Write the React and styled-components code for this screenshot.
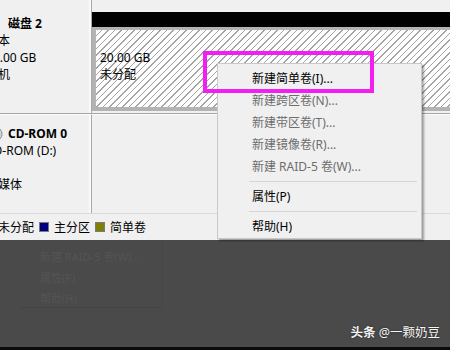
import React from 'react';
import styled, { createGlobalStyle } from 'styled-components';

const GlobalStyle = createGlobalStyle`
  html, body {
    margin: 0;
    padding: 0;
    background: #4a4a4a;
  }
  * {
    box-sizing: border-box;
  }
`;

const FONT = `"Noto Sans", "Noto Sans CJK SC", sans-serif`;

const Screen = styled.div`
  position: relative;
  width: 450px;
  height: 350px;
  overflow: hidden;
  display: flex;
  flex-direction: column;
  background: #4a4a4a;
  font-family: ${FONT};
  font-size: 12px;
  color: #000;
`;

const Window = styled.div`
  height: 240px;
  flex: none;
  display: flex;
  flex-direction: column;
  background: #f0f0f0;
`;

const DiskRow = styled.div`
  display: grid;
  grid-template-columns: 92px 1fr;
  height: ${(p) => p.$height}px;
  border-bottom: ${(p) => (p.$divider ? '1px solid #a6a6a6' : 'none')};
`;

const Label = styled.div`
  overflow: hidden;
  border-right: 1px solid #a9a9a9;
  box-shadow: inset -2px 0 0 #fafafa;
  padding-top: ${(p) => p.$top}px;
  line-height: 17px;
  white-space: nowrap;
  border-top: ${(p) => (p.$topLine ? '1px solid #fbfbfb' : 'none')};
`;

const LabelTitle = styled.div`
  display: flex;
  align-items: center;
  gap: 5px;
  font-weight: 700;
  padding-left: ${(p) => (p.$icon ? 0 : 8)}px;
`;

const DriveIcon = styled.svg`
  flex: none;
  margin-left: -13px;
`;

const LabelLine = styled.div`
  margin-left: -14px;
  height: 17px;
`;

const DiskArea = styled.div`
  padding-top: 12px;
  border-top: ${(p) => (p.$topLine ? '1px solid #fbfbfb' : 'none')};
`;

const DiskBar = styled.div`
  height: 15px;
  background: #000;
`;

const Partition = styled.div`
  height: 84px;
  border: 4px solid #b3b3b3;
  border-top-width: 3px;
  border-right: none;
  padding: 19px 0 0 4px;
  line-height: 17px;
  background-color: #fff;
  background-image: repeating-linear-gradient(
    135deg,
    #fff 0px,
    #fff 3.6px,
    #a4a4a4 3.6px,
    #a4a4a4 4.6px
  );
`;

const Legend = styled.div`
  flex: 1;
  display: flex;
  align-items: center;
  gap: 5px;
  margin-left: -17px;
  padding-bottom: 1px;
  border-top: 1px solid #dadada;
  white-space: nowrap;
`;

const Swatch = styled.span`
  width: 10px;
  height: 10px;
  flex: none;
  background: ${(p) => p.$color};
  outline: 1px solid #7a7a7a;
  outline-offset: -1px;
`;

const Menu = styled.div`
  position: absolute;
  left: 217px;
  top: 63px;
  width: 205px;
  height: 176px;
  padding: 4px 2px;
  background: #f0f0f0;
  border: 1px solid #c8c8c8;
  box-shadow: 2px 2px 2px rgba(0, 0, 0, 0.35);
`;

const MenuItem = styled.div`
  height: 22px;
  line-height: 22px;
  padding-left: 32px;
  color: ${(p) => (p.$disabled ? '#6d6d6d' : '#000')};
  white-space: nowrap;
`;

const MenuSep = styled.div`
  height: 1px;
  margin: 3px 2px 4px 29px;
  background: #d5d5d5;
`;

const Highlight = styled.div`
  position: absolute;
  left: 203px;
  top: 51px;
  width: 171px;
  height: 42px;
  border: 4px solid #f21ff2;
`;

const Shade = styled.div`
  flex: 1;
  display: flex;
  flex-direction: column;
`;

const GhostMenu = styled.div`
  width: 143px;
  height: 68px;
  margin-left: 20px;
  padding: 6px 0 0 20px;
  border-right: 1px solid #464646;
  border-bottom: 1px solid #444;
  line-height: 21px;
  font-size: 11px;
  color: #545454;
  white-space: nowrap;
`;

const Watermark = styled.div`
  align-self: flex-end;
  margin: auto 10px 6px 0;
  font-size: 12.5px;
  line-height: 16px;
  color: #f4f4f4;
  text-shadow: 0 0 2px rgba(0, 0, 0, 0.6);
  white-space: nowrap;

  b {
    font-weight: 700;
  }
`;

const BlackStrip = styled.div`
  height: 3px;
  background: #0a0a0a;
`;

const menuItems = [
  { text: '新建简单卷(I)...' },
  { text: '新建跨区卷(N)...', disabled: true },
  { text: '新建带区卷(T)...', disabled: true },
  { text: '新建镜像卷(R)...', disabled: true },
  { text: '新建 RAID-5 卷(W)...', disabled: true },
  { sep: true },
  { text: '属性(P)' },
  { sep: true },
  { text: '帮助(H)' },
];

export default function App() {
  return (
    <>
      <GlobalStyle />
      <Screen>
        <Window>
          <DiskRow $height={114} $divider>
            <Label $top={15}>
              <LabelTitle>磁盘 2</LabelTitle>
              <LabelLine>基本</LabelLine>
              <LabelLine>20.00 GB</LabelLine>
              <LabelLine>联机</LabelLine>
            </Label>
            <DiskArea>
              <DiskBar />
              <Partition>
                <div>20.00 GB</div>
                <div>未分配</div>
              </Partition>
            </DiskArea>
          </DiskRow>
          <DiskRow $height={99}>
            <Label $top={10} $topLine>
              <LabelTitle $icon>
                <DriveIcon width="16" height="16" viewBox="0 0 16 16">
                  <circle cx="8" cy="8" r="7" fill="#d8d8d8" stroke="#8a8a8a" />
                  <circle cx="8" cy="8" r="2" fill="#f0f0f0" stroke="#8a8a8a" />
                </DriveIcon>
                CD-ROM 0
              </LabelTitle>
              <LabelLine>CD-ROM (D:)</LabelLine>
              <LabelLine />
              <LabelLine>无媒体</LabelLine>
            </Label>
            <DiskArea $topLine />
          </DiskRow>
          <Legend>
            <Swatch $color="#000" />
            <span>未分配</span>
            <Swatch $color="#000080" />
            <span>主分区</span>
            <Swatch $color="#808000" />
            <span>简单卷</span>
          </Legend>
        </Window>
        <Shade>
          <GhostMenu>
            <div>新建 RAID-5 卷(W)...</div>
            <div>属性(P)</div>
            <div>帮助(H)</div>
          </GhostMenu>
          <Watermark>
            <b>头条</b> @一颗奶豆
          </Watermark>
        </Shade>
        <BlackStrip />
        <Menu>
          {menuItems.map((item, i) =>
            item.sep ? (
              <MenuSep key={i} />
            ) : (
              <MenuItem key={i} $disabled={item.disabled}>
                {item.text}
              </MenuItem>
            )
          )}
        </Menu>
        <Highlight />
      </Screen>
    </>
  );
}
